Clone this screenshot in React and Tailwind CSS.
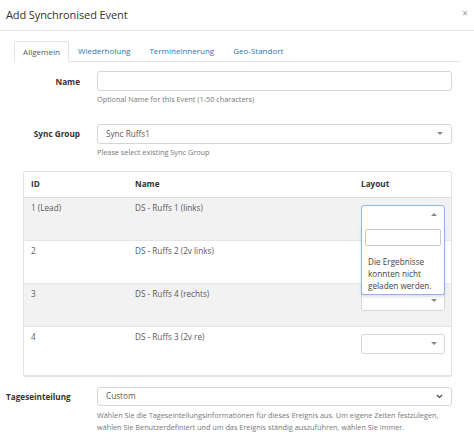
import React from "react";

const Caret = ({ up = false }) => (
  <span
    className={
      "ml-auto w-0 h-0 border-x-[3px] border-x-transparent " +
      (up ? "border-b-[3px] border-b-[#888]" : "border-t-[3px] border-t-[#888]")
    }
  />
);

const SmallSelect = ({ open = false }) => (
  <div
    className={
      "w-[84px] h-[20px] bg-white rounded-[3px] flex items-center px-[7px] border " +
      (open ? "border-[#8fb5e6] rounded-b-none" : "border-[#d6d6d6]")
    }
  >
    <Caret up={open} />
  </div>
);

const rows = [
  { id: "1 (Lead)", name: "DS - Ruffs 1 (links)", gray: true, open: true },
  { id: "2", name: "DS - Ruffs 2 (2v links)", gray: false, hidden: true },
  { id: "3", name: "DS - Ruffs 4 (rechts)", gray: true },
  { id: "4", name: "DS - Ruffs 3 (2v re)", gray: false, tall: true },
];

const App = () => {
  return (
    <div className="w-[474px] h-[440px] bg-white overflow-hidden text-[#5a5a5a] font-['Open_Sans','Noto_Sans',sans-serif] text-[8.2px]">
      {/* Header */}
      <div className="h-[31px] flex items-center justify-between pl-[6px] pr-[6px] border-b border-[#e8e8e8]">
        <h1 className="text-[11px] text-[#333] tracking-[-0.1px]">Add Synchronised Event</h1>
        <span className="text-[10px] text-[#999] leading-none -mt-[4px]">×</span>
      </div>

      {/* Tabs */}
      <div className="ml-[14px] mt-[10px] w-[446px] flex border-b border-[#e2e2e2] h-[21px] text-[8px]">
        <div className="w-[55px] border border-[#e2e2e2] border-b-white bg-white -mb-px rounded-t-[2px] flex items-center justify-center text-[#555]">
          Allgemein
        </div>
        <div className="flex items-center text-[#2a74b8] gap-[19px] pl-[9px]">
          <span>Wiederholung</span>
          <span>Termineinnerung</span>
          <span>Geo-Standort</span>
        </div>
      </div>

      {/* Name */}
      <div className="flex mt-[9px]">
        <div className="w-[80px] text-right font-bold text-[#333] pt-[5px]">Name</div>
        <div className="ml-[17px] w-[355px]">
          <div className="h-[20px] border border-[#d6d6d6] rounded-[3px]" />
          <div className="text-[7.3px] text-[#777] mt-[3px]">Optional Name for this Event (1-50 characters)</div>
        </div>
      </div>

      {/* Sync Group */}
      <div className="flex mt-[19px]">
        <div className="w-[80px] text-right font-bold text-[#333] pt-[4px]">Sync Group</div>
        <div className="ml-[17px] w-[355px]">
          <div className="h-[20px] border border-[#d6d6d6] rounded-[3px] flex items-center px-[8px]">
            <span>Sync Ruffs1</span>
            <Caret />
          </div>
          <div className="text-[7.3px] text-[#777] mt-[3px]">Please select existing Sync Group</div>
        </div>
      </div>

      {/* Table */}
      <div className="relative ml-[23px] mt-[13px] w-[429px] border border-[#e3e3e3] rounded-[2px]">
        <div className="flex h-[26px] items-center font-bold text-[#333] border-b border-[#dedede]">
          <div className="w-[111px] pl-[7px]">ID</div>
          <div className="w-[226px]">Name</div>
          <div>Layout</div>
        </div>
        {rows.map((r) => (
          <div
            key={r.id}
            className={
              "flex border-b border-[#e5e5e5] last:border-b-0 " +
              (r.gray ? "bg-[#f2f2f2] " : "bg-white ") +
              (r.tall ? "h-[49px]" : "h-[43px]")
            }
          >
            <div className="w-[111px] pl-[7px] pt-[4px]">{r.id}</div>
            <div className="w-[226px] pt-[4px]">{r.name}</div>
            <div className="pt-[7px]">{!r.hidden && <SmallSelect open={r.open} />}</div>
          </div>
        ))}

        {/* open dropdown */}
        <div className="absolute left-[337px] top-[52px] w-[84px] bg-white border border-[#8fb5e6] border-t-0 rounded-b-[3px] shadow-[0_2px_3px_rgba(0,0,0,0.12)] px-[3px] pt-[5px] pb-[2px]">
          <div className="h-[17px] border border-[#c8c8c8] rounded-[2px]" />
          <div className="mt-[10px] pl-[3px] leading-[12px] text-[#444]">
            Die Ergebnisse
            <br />
            konnten nicht
            <br />
            geladen werden.
          </div>
        </div>
      </div>

      {/* Tageseinteilung */}
      <div className="flex mt-[10px]">
        <div className="w-[87px] pl-[6px] font-bold text-[#333] pt-[4px] whitespace-nowrap">Tageseinteilung</div>
        <div className="ml-[10px] w-[355px]">
          <div className="h-[19px] border border-[#d6d6d6] rounded-[3px] flex items-center px-[8px]">
            <span>Custom</span>
            <svg className="ml-auto" width="7" height="5" viewBox="0 0 7 5">
              <path d="M1 1l2.5 2.5L6 1" fill="none" stroke="#444" strokeWidth="1.2" />
            </svg>
          </div>
          <div className="text-[7.3px] text-[#777] mt-[3px] leading-[12px]">
            Wählen Sie die Tageseinteilungsinformationen für dieses Ereignis aus. Um eigene Zeiten festzulegen, wählen Sie Benutzerdefiniert und um das Ereignis ständig auszuführen, wählen Sie Immer.
          </div>
        </div>
      </div>
    </div>
  );
};

export default App;
